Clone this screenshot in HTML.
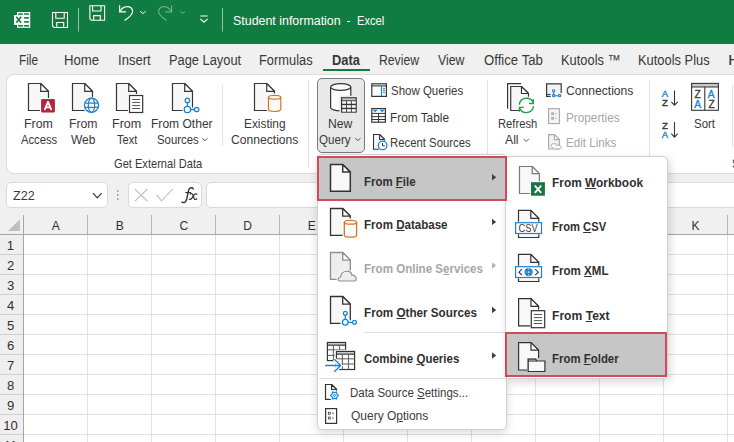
<!DOCTYPE html>
<html><head><meta charset="utf-8">
<style>
*{margin:0;padding:0;box-sizing:border-box}
html,body{width:734px;height:442px;overflow:hidden;background:#fff;font-family:"Liberation Sans",sans-serif;color:#262626}
.a{position:absolute}
.t{position:absolute;white-space:nowrap;transform-origin:0 0}
svg{position:absolute;overflow:visible}
</style></head><body>
<div class="a" style="left:0;top:0;width:734px;height:44px;background:#107c41"></div>
<div class="a" style="left:0;top:44px;width:734px;height:190px;background:#f0f0f0"></div>
<div class="a" style="left:323px;top:69px;width:47px;height:2px;background:#107c41"></div>
<div class="a" style="left:6px;top:74px;width:741px;height:100px;background:#fff;border:1px solid #dcdcdc;border-radius:8px"></div>
<!-- ribbon separators -->
<div class="a" style="left:222px;top:85px;width:1px;height:61px;background:#e1e1e1"></div>
<div class="a" style="left:308px;top:80px;width:1px;height:88px;background:#e1e1e1"></div>
<div class="a" style="left:487px;top:80px;width:1px;height:88px;background:#e1e1e1"></div>
<div class="a" style="left:649px;top:80px;width:1px;height:88px;background:#e1e1e1"></div>
<div class="a" style="left:732px;top:85px;width:1px;height:62px;background:#e1e1e1"></div>
<!-- new query button -->
<div class="a" style="left:317px;top:78px;width:48px;height:75px;background:#e8e8e8;border:1px solid #7a7a7a;border-radius:5px"></div>
<!-- formula bar -->
<div class="a" style="left:6px;top:182px;width:102px;height:26px;background:#fff;border:1px solid #dadada;border-radius:5px"></div>
<div class="a" style="left:128px;top:182px;width:74px;height:26px;background:#fff;border:1px solid #dadada;border-radius:5px"></div>
<div class="a" style="left:206px;top:182px;width:560px;height:26px;background:#fff;border:1px solid #dadada;border-radius:5px"></div>
<div class="a" style="left:87px;top:234px;width:1px;height:208px;background:#e1e1e1"></div>
<div class="a" style="left:151px;top:234px;width:1px;height:208px;background:#e1e1e1"></div>
<div class="a" style="left:215px;top:234px;width:1px;height:208px;background:#e1e1e1"></div>
<div class="a" style="left:279px;top:234px;width:1px;height:208px;background:#e1e1e1"></div>
<div class="a" style="left:343px;top:234px;width:1px;height:208px;background:#e1e1e1"></div>
<div class="a" style="left:407px;top:234px;width:1px;height:208px;background:#e1e1e1"></div>
<div class="a" style="left:471px;top:234px;width:1px;height:208px;background:#e1e1e1"></div>
<div class="a" style="left:535px;top:234px;width:1px;height:208px;background:#e1e1e1"></div>
<div class="a" style="left:599px;top:234px;width:1px;height:208px;background:#e1e1e1"></div>
<div class="a" style="left:663px;top:234px;width:1px;height:208px;background:#e1e1e1"></div>
<div class="a" style="left:727px;top:234px;width:1px;height:208px;background:#e1e1e1"></div>
<div class="a" style="left:24px;top:254px;width:710px;height:1px;background:#e1e1e1"></div>
<div class="a" style="left:24px;top:274px;width:710px;height:1px;background:#e1e1e1"></div>
<div class="a" style="left:24px;top:294px;width:710px;height:1px;background:#e1e1e1"></div>
<div class="a" style="left:24px;top:314px;width:710px;height:1px;background:#e1e1e1"></div>
<div class="a" style="left:24px;top:334px;width:710px;height:1px;background:#e1e1e1"></div>
<div class="a" style="left:24px;top:354px;width:710px;height:1px;background:#e1e1e1"></div>
<div class="a" style="left:24px;top:374px;width:710px;height:1px;background:#e1e1e1"></div>
<div class="a" style="left:24px;top:394px;width:710px;height:1px;background:#e1e1e1"></div>
<div class="a" style="left:24px;top:414px;width:710px;height:1px;background:#e1e1e1"></div>
<div class="a" style="left:24px;top:434px;width:710px;height:1px;background:#e1e1e1"></div>
<div class="a" style="left:0;top:234px;width:23px;height:208px;background:#efefef"></div>
<div class="a" style="left:0;top:254px;width:23px;height:1px;background:#cfcfcf"></div>
<div class="a" style="left:0;top:274px;width:23px;height:1px;background:#cfcfcf"></div>
<div class="a" style="left:0;top:294px;width:23px;height:1px;background:#cfcfcf"></div>
<div class="a" style="left:0;top:314px;width:23px;height:1px;background:#cfcfcf"></div>
<div class="a" style="left:0;top:334px;width:23px;height:1px;background:#cfcfcf"></div>
<div class="a" style="left:0;top:354px;width:23px;height:1px;background:#cfcfcf"></div>
<div class="a" style="left:0;top:374px;width:23px;height:1px;background:#cfcfcf"></div>
<div class="a" style="left:0;top:394px;width:23px;height:1px;background:#cfcfcf"></div>
<div class="a" style="left:0;top:414px;width:23px;height:1px;background:#cfcfcf"></div>
<div class="a" style="left:0;top:434px;width:23px;height:1px;background:#cfcfcf"></div>
<div class="a" style="left:23px;top:215px;width:1px;height:227px;background:#a6a6a6"></div>
<div class="a" style="left:87px;top:215px;width:1px;height:19px;background:#b4b4b4"></div>
<div class="a" style="left:151px;top:215px;width:1px;height:19px;background:#b4b4b4"></div>
<div class="a" style="left:215px;top:215px;width:1px;height:19px;background:#b4b4b4"></div>
<div class="a" style="left:279px;top:215px;width:1px;height:19px;background:#b4b4b4"></div>
<div class="a" style="left:343px;top:215px;width:1px;height:19px;background:#b4b4b4"></div>
<div class="a" style="left:407px;top:215px;width:1px;height:19px;background:#b4b4b4"></div>
<div class="a" style="left:471px;top:215px;width:1px;height:19px;background:#b4b4b4"></div>
<div class="a" style="left:535px;top:215px;width:1px;height:19px;background:#b4b4b4"></div>
<div class="a" style="left:599px;top:215px;width:1px;height:19px;background:#b4b4b4"></div>
<div class="a" style="left:663px;top:215px;width:1px;height:19px;background:#b4b4b4"></div>
<div class="a" style="left:727px;top:215px;width:1px;height:19px;background:#b4b4b4"></div>
<div class="a" style="left:0;top:234px;width:734px;height:1px;background:#a6a6a6"></div>
<svg style="left:0;top:0" width="734" height="442"><polygon points="20,219 20,231 8,231" fill="#bfbfbf"/></svg>
<div class="t" style="left:232.64px;top:14.26px;font-size:13.08px;line-height:14.61px;font-weight:normal;color:#ffffff;transform:scaleX(0.9493);">Student information</div>
<div class="t" style="left:356.81px;top:14.26px;font-size:13.08px;line-height:14.61px;font-weight:normal;color:#ffffff;transform:scaleX(0.8542);">Excel</div>
<div class="a" style="left:346.7px;top:21.3px;width:3.8px;height:1.1px;background:#fff"></div>
<div class="t" style="left:18.75px;top:52.51px;font-size:14.24px;line-height:15.91px;font-weight:normal;color:#383838;transform:scaleX(0.8320);">File</div>
<div class="t" style="left:64.44px;top:52.51px;font-size:14.24px;line-height:15.91px;font-weight:normal;color:#383838;transform:scaleX(0.9259);">Home</div>
<div class="t" style="left:118.02px;top:52.51px;font-size:14.24px;line-height:15.91px;font-weight:normal;color:#383838;transform:scaleX(0.9195);">Insert</div>
<div class="t" style="left:168.97px;top:52.51px;font-size:14.24px;line-height:15.91px;font-weight:normal;color:#383838;transform:scaleX(0.9026);">Page Layout</div>
<div class="t" style="left:259.27px;top:52.51px;font-size:14.24px;line-height:15.91px;font-weight:normal;color:#383838;transform:scaleX(0.9037);">Formulas</div>
<div class="t" style="left:378.72px;top:52.51px;font-size:14.24px;line-height:15.91px;font-weight:normal;color:#383838;transform:scaleX(0.8578);">Review</div>
<div class="t" style="left:438.34px;top:52.51px;font-size:14.24px;line-height:15.91px;font-weight:normal;color:#383838;transform:scaleX(0.8673);">View</div>
<div class="t" style="left:483.91px;top:52.51px;font-size:14.24px;line-height:15.91px;font-weight:normal;color:#383838;transform:scaleX(0.9264);">Office Tab</div>
<div class="t" style="left:561.37px;top:52.51px;font-size:14.24px;line-height:15.91px;font-weight:normal;color:#383838;transform:scaleX(0.9043);">Kutools ™</div>
<div class="t" style="left:638.17px;top:52.51px;font-size:14.24px;line-height:15.91px;font-weight:normal;color:#383838;transform:scaleX(0.9051);">Kutools Plus</div>
<div class="t" style="left:331.76px;top:52.51px;font-size:14.24px;line-height:15.91px;font-weight:bold;color:#383838;transform:scaleX(0.9050);">Data</div>
<div class="t" style="left:728.41px;top:52.51px;font-size:14.24px;line-height:15.91px;font-weight:normal;color:#383838;transform:scaleX(1.2160);">H</div>
<div class="t" style="left:24.41px;top:117.95px;font-size:12.21px;line-height:13.64px;font-weight:normal;color:#383838;transform:scaleX(1.0158);">From</div>
<div class="t" style="left:21.24px;top:133.85px;font-size:12.21px;line-height:13.64px;font-weight:normal;color:#383838;transform:scaleX(0.9181);">Access</div>
<div class="t" style="left:68.62px;top:117.95px;font-size:12.21px;line-height:13.64px;font-weight:normal;color:#383838;transform:scaleX(1.0008);">From</div>
<div class="t" style="left:71.14px;top:133.85px;font-size:12.21px;line-height:13.64px;font-weight:normal;color:#383838;transform:scaleX(0.9796);">Web</div>
<div class="t" style="left:112.20px;top:117.95px;font-size:12.21px;line-height:13.64px;font-weight:normal;color:#383838;transform:scaleX(1.0271);">From</div>
<div class="t" style="left:116.78px;top:133.85px;font-size:12.21px;line-height:13.64px;font-weight:normal;color:#383838;transform:scaleX(0.9030);">Text</div>
<div class="t" style="left:151.43px;top:117.95px;font-size:12.21px;line-height:13.64px;font-weight:normal;color:#383838;transform:scaleX(0.9881);">From Other</div>
<div class="t" style="left:156.59px;top:133.85px;font-size:12.21px;line-height:13.64px;font-weight:normal;color:#383838;transform:scaleX(0.9331);">Sources</div>
<div class="t" style="left:243.65px;top:117.95px;font-size:12.21px;line-height:13.64px;font-weight:normal;color:#383838;transform:scaleX(0.9716);">Existing</div>
<div class="t" style="left:230.99px;top:133.85px;font-size:12.21px;line-height:13.64px;font-weight:normal;color:#383838;transform:scaleX(0.9933);">Connections</div>
<div class="t" style="left:328.43px;top:117.95px;font-size:12.21px;line-height:13.64px;font-weight:normal;color:#383838;transform:scaleX(0.9956);">New</div>
<div class="t" style="left:319.18px;top:133.85px;font-size:12.21px;line-height:13.64px;font-weight:normal;color:#383838;transform:scaleX(0.9492);">Query</div>
<div class="t" style="left:497.80px;top:117.95px;font-size:12.21px;line-height:13.64px;font-weight:normal;color:#383838;transform:scaleX(0.9179);">Refresh</div>
<div class="t" style="left:505.44px;top:133.85px;font-size:12.21px;line-height:13.64px;font-weight:normal;color:#383838;transform:scaleX(1.0002);">All</div>
<div class="t" style="left:693.68px;top:117.95px;font-size:12.21px;line-height:13.64px;font-weight:normal;color:#383838;transform:scaleX(0.9387);">Sort</div>
<div class="t" style="left:113.94px;top:158.01px;font-size:11.92px;line-height:13.31px;font-weight:normal;color:#383838;transform:scaleX(0.9320);">Get External Data</div>
<div class="t" style="left:732.03px;top:158.01px;font-size:11.92px;line-height:13.31px;font-weight:normal;color:#383838;transform:scaleX(0.8755);">S</div>
<div class="t" style="left:390.88px;top:84.39px;font-size:12.94px;line-height:14.45px;font-weight:normal;color:#383838;transform:scaleX(0.8877);">Show Queries</div>
<div class="t" style="left:390.45px;top:110.56px;font-size:12.65px;line-height:14.12px;font-weight:normal;color:#383838;transform:scaleX(0.9366);">From Table</div>
<div class="t" style="left:390.49px;top:135.86px;font-size:13.08px;line-height:14.61px;font-weight:normal;color:#383838;transform:scaleX(0.8671);">Recent Sources</div>
<div class="t" style="left:565.99px;top:84.39px;font-size:12.94px;line-height:14.45px;font-weight:normal;color:#383838;transform:scaleX(0.9375);">Connections</div>
<div class="t" style="left:565.66px;top:110.56px;font-size:12.65px;line-height:14.12px;font-weight:normal;color:#a6a6a6;transform:scaleX(0.9305);">Properties</div>
<div class="t" style="left:565.67px;top:135.86px;font-size:13.08px;line-height:14.61px;font-weight:normal;color:#a6a6a6;transform:scaleX(0.8876);">Edit Links</div>
<div class="t" style="left:12.72px;top:188.80px;font-size:13.37px;line-height:14.94px;font-weight:normal;color:#383838;transform:scaleX(0.9439);">Z22</div>
<div class="t" style="left:51.86px;top:220.08px;font-size:12.06px;line-height:13.48px;font-weight:normal;color:#303030;transform:scaleX(1.0000);">A</div>
<div class="t" style="left:115.71px;top:220.08px;font-size:12.06px;line-height:13.48px;font-weight:normal;color:#303030;transform:scaleX(1.0000);">B</div>
<div class="t" style="left:179.50px;top:220.08px;font-size:12.06px;line-height:13.48px;font-weight:normal;color:#303030;transform:scaleX(1.0000);">C</div>
<div class="t" style="left:243.35px;top:220.08px;font-size:12.06px;line-height:13.48px;font-weight:normal;color:#303030;transform:scaleX(1.0000);">D</div>
<div class="t" style="left:307.65px;top:220.08px;font-size:12.06px;line-height:13.48px;font-weight:normal;color:#303030;transform:scaleX(1.0000);">E</div>
<div class="t" style="left:371.98px;top:220.08px;font-size:12.06px;line-height:13.48px;font-weight:normal;color:#303030;transform:scaleX(1.0000);">F</div>
<div class="t" style="left:435.35px;top:220.08px;font-size:12.06px;line-height:13.48px;font-weight:normal;color:#303030;transform:scaleX(1.0000);">G</div>
<div class="t" style="left:499.56px;top:220.08px;font-size:12.06px;line-height:13.48px;font-weight:normal;color:#303030;transform:scaleX(1.0000);">H</div>
<div class="t" style="left:566.24px;top:220.08px;font-size:12.06px;line-height:13.48px;font-weight:normal;color:#303030;transform:scaleX(1.0000);">I</div>
<div class="t" style="left:629.25px;top:220.08px;font-size:12.06px;line-height:13.48px;font-weight:normal;color:#303030;transform:scaleX(1.0000);">J</div>
<div class="t" style="left:691.47px;top:220.08px;font-size:12.06px;line-height:13.48px;font-weight:normal;color:#303030;transform:scaleX(1.0000);">K</div>
<div class="t" style="left:6.87px;top:239.16px;font-size:13.08px;line-height:14.61px;font-weight:normal;color:#303030;transform:scaleX(1.0000);">1</div>
<div class="t" style="left:7.07px;top:259.16px;font-size:13.08px;line-height:14.61px;font-weight:normal;color:#303030;transform:scaleX(1.0000);">2</div>
<div class="t" style="left:7.10px;top:279.16px;font-size:13.08px;line-height:14.61px;font-weight:normal;color:#303030;transform:scaleX(1.0000);">3</div>
<div class="t" style="left:7.10px;top:299.16px;font-size:13.08px;line-height:14.61px;font-weight:normal;color:#303030;transform:scaleX(1.0000);">4</div>
<div class="t" style="left:7.07px;top:319.16px;font-size:13.08px;line-height:14.61px;font-weight:normal;color:#303030;transform:scaleX(1.0000);">5</div>
<div class="t" style="left:7.04px;top:339.16px;font-size:13.08px;line-height:14.61px;font-weight:normal;color:#303030;transform:scaleX(1.0000);">6</div>
<div class="t" style="left:7.07px;top:359.16px;font-size:13.08px;line-height:14.61px;font-weight:normal;color:#303030;transform:scaleX(1.0000);">7</div>
<div class="t" style="left:7.04px;top:379.16px;font-size:13.08px;line-height:14.61px;font-weight:normal;color:#303030;transform:scaleX(1.0000);">8</div>
<div class="t" style="left:7.07px;top:399.16px;font-size:13.08px;line-height:14.61px;font-weight:normal;color:#303030;transform:scaleX(1.0000);">9</div>
<div class="t" style="left:3.21px;top:419.16px;font-size:13.08px;line-height:14.61px;font-weight:normal;color:#303030;transform:scaleX(1.0000);">10</div>
<div class="t" style="left:3.73px;top:439.16px;font-size:13.08px;line-height:14.61px;font-weight:normal;color:#303030;transform:scaleX(1.0000);">11</div>
<svg style="left:0;top:0" width="734" height="442" viewBox="0 0 734 442"><rect x="17" y="12" width="13.2" height="15.8" fill="#ffffff"/><rect x="18.2" y="13.3" width="4.70" height="1.50" fill="#107c41"/><rect x="18.2" y="17.1" width="4.70" height="1.60" fill="#107c41"/><rect x="18.2" y="21.1" width="4.70" height="1.60" fill="#107c41"/><rect x="18.2" y="25" width="4.70" height="1.60" fill="#107c41"/><rect x="24.1" y="13.3" width="4.80" height="1.50" fill="#107c41"/><rect x="24.1" y="17.1" width="4.80" height="1.60" fill="#107c41"/><rect x="24.1" y="21.1" width="4.80" height="1.60" fill="#107c41"/><rect x="24.1" y="25" width="4.80" height="1.60" fill="#107c41"/><rect x="14" y="15" width="9.5" height="10" fill="#ffffff"/><path d="M16.3 16.8 L21.2 22.8 M21.2 16.8 L16.3 22.8" stroke="#107c41" stroke-width="1.6"/><path d="M52.5 12.5 H67.5 V27.5 H54 L52.5 26 Z" fill="none" stroke="#ffffff" stroke-width="1.1"/><path d="M55.8 12.5 V18.2 H64.2 V12.5" fill="none" stroke="#ffffff" stroke-width="1.1"/><path d="M56.8 27.5 V22.5 H63.7 V27.5" fill="none" stroke="#ffffff" stroke-width="1.1"/><path d="M89.9 5.8 H104.6 V20.2 H91.4 L89.9 18.7 Z" fill="none" stroke="#ffffff" stroke-width="1.1"/><path d="M92.6 5.8 V11 H101 V5.8" fill="none" stroke="#ffffff" stroke-width="1.1"/><path d="M93.7 20.2 V15.6 H100.3 V20.2" fill="none" stroke="#ffffff" stroke-width="1.1"/><rect x="78" y="8" width="1" height="23.6" fill="rgba(255,255,255,0.55)"/><rect x="222" y="8" width="1" height="23.6" fill="rgba(255,255,255,0.55)"/><path d="M119.6 5.3 V11.8 H126" fill="none" stroke="#ffffff" stroke-width="1.2"/><path d="M120.3 11.2 C123 5.5 131.5 5 132.6 10.8 C133.3 14 130 16.8 124.5 20.6" fill="none" stroke="#ffffff" stroke-width="1.2"/><path d="M140.2 11.2 L142.9 13.6 L145.6 11.2" fill="none" stroke="#ffffff" stroke-width="1"/><path d="M171.6 5.3 V11.8 H165.2" fill="none" stroke="rgba(255,255,255,0.38)" stroke-width="1.2"/><path d="M170.9 11.2 C168.2 5.5 159.7 5 158.6 10.8 C157.9 14 161.2 16.8 166.7 20.6" fill="none" stroke="rgba(255,255,255,0.38)" stroke-width="1.2"/><path d="M179.8 11.2 L182.4 13.4 L185 11.2" fill="none" stroke="rgba(255,255,255,0.38)" stroke-width="1"/><path d="M200.3 16 H207.6 M200.3 18.8 L203.95 22.2 L207.6 18.8" fill="none" stroke="#ffffff" stroke-width="1.1"/><path d="M28.5 83.5 H40.7 L48.5 91.3 V110.5 H28.5 Z" fill="#f7f7f7" stroke="#363636" stroke-width="1.2" stroke-miterlimit="2"/><path d="M40.7 83.5 V91.3 H48.5 Z" fill="#ffffff" stroke="#363636" stroke-width="1.2" stroke-miterlimit="2"/><rect x="40" y="98" width="16" height="15.6" fill="#fff"/><rect x="41.1" y="99.1" width="13.8" height="13.5" rx="1" fill="#b5243a"/><path d="M44.6 110 L48 101.8 L51.4 110 M45.9 107.4 H50.1" fill="none" stroke="#fff" stroke-width="1.9" stroke-linejoin="round"/><path d="M72.5 83.5 H84.7 L92.5 91.3 V110.5 H72.5 Z" fill="#f7f7f7" stroke="#363636" stroke-width="1.2" stroke-miterlimit="2"/><path d="M84.7 83.5 V91.3 H92.5 Z" fill="#ffffff" stroke="#363636" stroke-width="1.2" stroke-miterlimit="2"/><circle cx="91.5" cy="105.3" r="8.6" fill="#fff"/><circle cx="91.5" cy="105.3" r="7.1" fill="#fff" stroke="#1b82d1" stroke-width="1.3"/><ellipse cx="91.5" cy="105.3" rx="3.2" ry="7.1" fill="none" stroke="#1b82d1" stroke-width="1.2"/><path d="M84.6 103.2 H98.4 M84.6 107.4 H98.4" stroke="#1b82d1" stroke-width="1.2"/><path d="M116.5 83.5 H128.7 L136.5 91.3 V110.5 H116.5 Z" fill="#f7f7f7" stroke="#363636" stroke-width="1.2" stroke-miterlimit="2"/><path d="M128.7 83.5 V91.3 H136.5 Z" fill="#ffffff" stroke="#363636" stroke-width="1.2" stroke-miterlimit="2"/><rect x="128" y="94" width="16" height="20" fill="#fff"/><rect x="129.5" y="95.5" width="13.2" height="17" fill="#fff" stroke="#363636" stroke-width="1.2"/><path d="M132.2 99.5 H140" stroke="#555" stroke-width="1"/><path d="M132.2 102.5 H140" stroke="#555" stroke-width="1"/><path d="M132.2 105.5 H140" stroke="#555" stroke-width="1"/><path d="M132.2 108.5 H140" stroke="#555" stroke-width="1"/><path d="M172.5 83.5 H184.7 L192.5 91.3 V110.5 H172.5 Z" fill="#f7f7f7" stroke="#363636" stroke-width="1.2" stroke-miterlimit="2"/><path d="M184.7 83.5 V91.3 H192.5 Z" fill="#ffffff" stroke="#363636" stroke-width="1.2" stroke-miterlimit="2"/><circle cx="187.4" cy="109.5" r="5.2" fill="#fff"/><circle cx="196.6" cy="109.5" r="3.7" fill="#fff"/><circle cx="187.4" cy="100.4" r="3.7" fill="#fff"/><path d="M187.4 100.4 V109.5 H196.6" stroke="#fff" stroke-width="4" fill="none"/><path d="M187.4 102.60000000000001 V106.3 M190.6 109.5 H194.4" stroke="#1b82d1" stroke-width="1.3"/><circle cx="187.4" cy="100.4" r="2.2" fill="#fff" stroke="#1b82d1" stroke-width="1.3"/><circle cx="187.4" cy="109.5" r="3.2" fill="#fff" stroke="#1b82d1" stroke-width="1.3"/><circle cx="196.6" cy="109.5" r="2.2" fill="#fff" stroke="#1b82d1" stroke-width="1.3"/><path d="M254.5 83.5 H266.7 L274.5 91.3 V110.5 H254.5 Z" fill="#f7f7f7" stroke="#363636" stroke-width="1.2" stroke-miterlimit="2"/><path d="M266.7 83.5 V91.3 H274.5 Z" fill="#ffffff" stroke="#363636" stroke-width="1.2" stroke-miterlimit="2"/><path d="M268.4 97.2 V109.6 A6.200000000000017 1.9 0 0 0 280.8 109.6 V97.2 A6.200000000000017 1.9 0 0 0 268.4 97.2 Z" fill="#fff" stroke="#fff" stroke-width="3.5999999999999996"/><path d="M268.4 97.2 V109.6 A6.200000000000017 1.9 0 0 0 280.8 109.6 V97.2" fill="#fbfbfb" stroke="#d9731d" stroke-width="1.2"/><ellipse cx="274.6" cy="97.2" rx="6.200000000000017" ry="1.9" fill="#fbfbfb" stroke="#d9731d" stroke-width="1.2"/><path d="M330.6 87 V107.8 A10.1 3 0 0 0 350.8 107.8 V87" fill="#fbfbfb" stroke="#363636" stroke-width="1.2"/><ellipse cx="340.7" cy="87" rx="10.1" ry="3.4" fill="#fbfbfb" stroke="#363636" stroke-width="1.2"/><rect x="339.5" y="95.8" width="18.6" height="18.2" fill="#e8e8e8"/><rect x="341" y="97.2" width="15.8" height="15.5" fill="#363636"/><rect x="342.2" y="98.3" width="13.4" height="2" fill="#c8c8c8"/><rect x="342.2" y="101.2" width="3.9" height="2.5" fill="#fff"/><rect x="342.2" y="105.2" width="3.9" height="2.5" fill="#fff"/><rect x="342.2" y="109.2" width="3.9" height="2.5" fill="#fff"/><rect x="347.0" y="101.2" width="3.9" height="2.5" fill="#fff"/><rect x="347.0" y="105.2" width="3.9" height="2.5" fill="#fff"/><rect x="347.0" y="109.2" width="3.9" height="2.5" fill="#fff"/><rect x="351.8" y="101.2" width="3.9" height="2.5" fill="#fff"/><rect x="351.8" y="105.2" width="3.9" height="2.5" fill="#fff"/><rect x="351.8" y="109.2" width="3.9" height="2.5" fill="#fff"/><rect x="371.8" y="83.8" width="14.6" height="12.6" fill="#fff" stroke="#363636" stroke-width="1.2"/><path d="M371.8 85.9 H386.4" stroke="#363636" stroke-width="1.1"/><path d="M381.5 86.3 V96" stroke="#1b82d1" stroke-width="1.2"/><rect x="383.2" y="87.80000000000001" width="1.6" height="1.3" fill="#1b82d1"/><rect x="383.2" y="89.80000000000001" width="1.6" height="1.3" fill="#1b82d1"/><rect x="383.2" y="91.9" width="1.6" height="1.3" fill="#1b82d1"/><rect x="371.8" y="108.6" width="13.6" height="13.6" fill="#fff" stroke="#363636" stroke-width="1.2"/><path d="M371.8 113.4 H385.4 M371.8 116.6 H385.4 M371.8 119.5 H385.4 M378.6 113.4 V122" stroke="#363636" stroke-width="1"/><path d="M373.2 110.1 H377.2 L375.2 111.9 Z M380.2 110.1 H384.2 L382.2 111.9 Z" fill="#1b82d1" stroke="#1b82d1" stroke-width="0.6"/><path d="M373.5 134.5 H379.6 L384.6 139.5 V149.3 H373.5 Z" fill="#f7f7f7" stroke="#363636" stroke-width="1.1" stroke-miterlimit="2"/><path d="M379.6 134.5 V139.5 H384.6 Z" fill="#ffffff" stroke="#363636" stroke-width="1.1" stroke-miterlimit="2"/><circle cx="382.6" cy="145.4" r="5.4" fill="#fff"/><circle cx="382.6" cy="145.4" r="4.3" fill="#fff" stroke="#1b82d1" stroke-width="1.3"/><path d="M382.5 143 V145.8 H384.8" fill="none" stroke="#363636" stroke-width="1"/><path d="M507.6 108.7 V83.6 H521" fill="none" stroke="#363636" stroke-width="1.2"/><path d="M510.7 86.5 H521.5 L528.5 93.5 V110.5 H510.7 Z" fill="#f7f7f7" stroke="#363636" stroke-width="1.2" stroke-miterlimit="2"/><path d="M521.5 86.5 V93.5 H528.5 Z" fill="#ffffff" stroke="#363636" stroke-width="1.2" stroke-miterlimit="2"/><circle cx="526.4" cy="105.2" r="9" fill="#fff"/><path d="M519.3 104.6 A7.25 7.25 0 0 1 533.4 103.3" fill="none" stroke="#22a049" stroke-width="1.35"/><path d="M533.4 98.9 V103.5 H529" fill="none" stroke="#22a049" stroke-width="1.35"/><path d="M533.5 106.2 A7.25 7.25 0 0 1 519.4 107.5" fill="none" stroke="#22a049" stroke-width="1.35"/><path d="M519.4 111.8 V107.3 H523.8" fill="none" stroke="#22a049" stroke-width="1.35"/><rect x="545.5" y="83" width="16.6" height="14" fill="#fff"/><rect x="547.2" y="84.6" width="13.2" height="9.2" fill="#f3f3f3"/><path d="M550.7 96.4 H546.6 V83.8 H561.2 V93" fill="none" stroke="#363636" stroke-width="1.2"/><path d="M546.6 94.4 H550.7" stroke="#363636" stroke-width="1"/><path d="M553.7 90.9 V95.7 H559.6" fill="none" stroke="#fff" stroke-width="3.6"/><rect x="551.6" y="88.8" width="4.2" height="4.2" rx="1" fill="#fff"/><rect x="551.6" y="93.6" width="4.2" height="4.2" rx="1" fill="#fff"/><rect x="557.5" y="93.6" width="4.2" height="4.2" rx="1" fill="#fff"/><path d="M553.7 90.9 V95.7 H559.6" fill="none" stroke="#1b82d1" stroke-width="1.1"/><rect x="552.6" y="89.8" width="2.2" height="2.2" rx="0.6" fill="#fff" stroke="#1b82d1" stroke-width="1.1"/><rect x="552.6" y="94.6" width="2.2" height="2.2" rx="0.6" fill="#fff" stroke="#1b82d1" stroke-width="1.1"/><rect x="558.5" y="94.6" width="2.2" height="2.2" rx="0.6" fill="#fff" stroke="#1b82d1" stroke-width="1.1"/><rect x="548.6" y="108.6" width="10.8" height="15" fill="#f4f4f4" stroke="#a8a8a8" stroke-width="1.1"/><rect x="551.7" y="112.8" width="1.8" height="1.8" fill="none" stroke="#a8a8a8" stroke-width="0.9"/><rect x="551.7" y="117.4" width="1.8" height="1.8" fill="none" stroke="#a8a8a8" stroke-width="0.9"/><path d="M555.2 113.7 H556.8 M555.2 118.3 H556.8" stroke="#a8a8a8" stroke-width="0.9"/><path d="M548.6 134.6 H554.4 L559.4 139.6 V149 H548.6 Z" fill="#f4f4f4" stroke="#a8a8a8" stroke-width="1.1" stroke-miterlimit="2"/><path d="M554.4 134.6 V139.6 H559.4 Z" fill="#ffffff" stroke="#a8a8a8" stroke-width="1.1" stroke-miterlimit="2"/><path d="M553 147.5 C550 147.5 550.5 143.6 553.5 143.8 L556.5 143.8 M556 145.2 L559 145.2 C562 145.2 562 149 559 149 L556 149" fill="#fff" stroke="#a8a8a8" stroke-width="1"/><text x="661.8" y="97" font-family="Liberation Sans" font-size="9.6" fill="#1b82d1" stroke="#1b82d1" stroke-width="0.35">A</text><text x="661.9" y="105.7" font-family="Liberation Sans" font-size="9.6" fill="#363636" stroke="#363636" stroke-width="0.35">Z</text><path d="M674.5 90.6 V105 M671.3 101.8 L674.5 105.2 L677.7 101.8" fill="none" stroke="#363636" stroke-width="1.1"/><text x="661.9" y="128.7" font-family="Liberation Sans" font-size="9.6" fill="#363636" stroke="#363636" stroke-width="0.35">Z</text><text x="661.8" y="138" font-family="Liberation Sans" font-size="9.6" fill="#1b82d1" stroke="#1b82d1" stroke-width="0.35">A</text><path d="M674.5 122 V137 M671.3 133.6 L674.5 137.2 L677.7 133.6" fill="none" stroke="#363636" stroke-width="1.1"/><rect x="691.6" y="83.4" width="26.8" height="3.6" fill="#c8c8c8"/><rect x="691.6" y="83.4" width="26.8" height="26.9" fill="none" stroke="#363636" stroke-width="1.1"/><path d="M691.6 87 H718.4 M704.8 87 V110.3" stroke="#363636" stroke-width="1.1"/><text x="694.6" y="97.8" font-family="Liberation Sans" font-size="10.2" fill="#363636" stroke="#363636" stroke-width="0.35">Z</text><text x="694.2" y="108.4" font-family="Liberation Sans" font-size="10.2" fill="#1b82d1" stroke="#1b82d1" stroke-width="0.35">A</text><text x="707.8" y="97.8" font-family="Liberation Sans" font-size="10.2" fill="#1b82d1" stroke="#1b82d1" stroke-width="0.35">A</text><text x="708.4" y="108.4" font-family="Liberation Sans" font-size="10.2" fill="#363636" stroke="#363636" stroke-width="0.35">Z</text><path d="M202.3 138.4 L204.9 140.6 L207.5 138.4" fill="none" stroke="#444" stroke-width="0.9"/><path d="M355.3 138.3 L357.90000000000003 140.5 L360.5 138.3" fill="none" stroke="#444" stroke-width="0.9"/><path d="M523.6 139.1 L526.2 141.29999999999998 L528.8000000000001 139.1" fill="none" stroke="#444" stroke-width="0.9"/><path d="M93 193.2 L97.3 197.8 L101.6 193.2" fill="none" stroke="#363636" stroke-width="1.2"/><rect x="117" y="190.3" width="1.5" height="1.5" fill="#8a8a8a"/><rect x="117" y="194.3" width="1.5" height="1.5" fill="#8a8a8a"/><rect x="117" y="198.3" width="1.5" height="1.5" fill="#8a8a8a"/><path d="M134.8 189 L147.4 201.2 M147.4 189 L134.8 201.2" stroke="#c4c4c4" stroke-width="1.2"/><path d="M156.6 195 L161.6 200.8 L172.6 189.2" fill="none" stroke="#c4c4c4" stroke-width="1.2"/><path d="M193.3 188.9 C192.2 187.2 189.6 187.4 188.8 189.6 C188.2 191.5 187.2 197.5 186.4 200 C185.7 202.5 183.8 203.2 182 202.1" fill="none" stroke="#363636" stroke-width="1.45" stroke-linecap="round"/><path d="M185.3 192.6 H191.2" stroke="#363636" stroke-width="1.2"/><path d="M190.3 194 C191.5 193.2 192.5 193.6 193.1 195.5 L194.1 198.4 C194.6 199.6 195.6 199.7 196.7 198.9 M196.9 194.2 C195.9 193.4 194.9 193.8 193.6 195.6 L191.7 198.3 C191.0 199.4 190.2 199.6 189.3 199.2" fill="none" stroke="#363636" stroke-width="1.25" stroke-linecap="round"/></svg>
<!-- main menu -->
<div class="a" style="left:317px;top:154px;width:190px;height:276px;background:#fff;border:1px solid #d2d2d2;border-radius:5px;box-shadow:0 3px 10px rgba(0,0,0,0.15)"></div>
<div class="a" style="left:363px;top:332px;width:142px;height:1px;background:#dedede"></div>
<div class="a" style="left:319px;top:378px;width:186px;height:1px;background:#dedede"></div>
<!-- submenu -->
<div class="a" style="left:505px;top:156px;width:163px;height:223px;background:#fff;border:1px solid #d2d2d2;border-radius:5px;box-shadow:2px 3px 10px rgba(0,0,0,0.16)"></div>
<div class="a" style="left:317px;top:156px;width:190px;height:45px;background:#c6c6c6;border:2px solid #d4485c"></div>
<div class="a" style="left:505px;top:332px;width:162px;height:45px;background:#c6c6c6;border:2px solid #d4485c"></div>

<div class="t" style="left:363.76px;top:173.97px;font-size:13.52px;line-height:15.10px;font-weight:bold;color:#303030;transform:scaleX(0.8474);">From <u>F</u>ile</div>
<div class="t" style="left:363.65px;top:218.26px;font-size:13.08px;line-height:14.61px;font-weight:bold;color:#303030;transform:scaleX(0.8841);">From <u>D</u>atabase</div>
<div class="t" style="left:363.65px;top:262.10px;font-size:13.37px;line-height:14.94px;font-weight:bold;color:#a6a6a6;transform:scaleX(0.8658);">From Online S<u>e</u>rvices</div>
<div class="t" style="left:363.74px;top:306.26px;font-size:13.08px;line-height:14.61px;font-weight:bold;color:#303030;transform:scaleX(0.8927);">From <u>O</u>ther Sources</div>
<div class="t" style="left:364.04px;top:352.10px;font-size:13.37px;line-height:14.94px;font-weight:bold;color:#303030;transform:scaleX(0.8618);">Combine <u>Q</u>ueries</div>
<div class="t" style="left:350.48px;top:385.96px;font-size:13.08px;line-height:14.61px;font-weight:normal;color:#3a3a3a;transform:scaleX(0.8779);">Data Source <u>S</u>ettings...</div>
<div class="t" style="left:350.86px;top:409.42px;font-size:12.79px;line-height:14.29px;font-weight:normal;color:#3a3a3a;transform:scaleX(0.9372);">Query O<u>p</u>tions</div>
<div class="t" style="left:551.83px;top:176.06px;font-size:13.08px;line-height:14.61px;font-weight:bold;color:#303030;transform:scaleX(0.9097);">From <u>W</u>orkbook</div>
<div class="t" style="left:551.87px;top:220.06px;font-size:13.08px;line-height:14.61px;font-weight:bold;color:#303030;transform:scaleX(0.8560);">From <u>C</u>SV</div>
<div class="t" style="left:552.05px;top:264.33px;font-size:13.23px;line-height:14.77px;font-weight:bold;color:#303030;transform:scaleX(0.8735);">From <u>X</u>ML</div>
<div class="t" style="left:552.01px;top:308.62px;font-size:12.79px;line-height:14.29px;font-weight:bold;color:#303030;transform:scaleX(0.9472);">From <u>T</u>ext</div>
<div class="t" style="left:552.06px;top:351.90px;font-size:13.37px;line-height:14.94px;font-weight:bold;color:#303030;transform:scaleX(0.8550);">From <u>F</u>older</div>
<svg style="left:0;top:0" width="734" height="442" viewBox="0 0 734 442"><path d="M330.5 164.5 H342.7 L350.3 172.1 V191.2 H330.5 Z" fill="#f8f8f8" stroke="#333333" stroke-width="1.5" stroke-miterlimit="2"/><path d="M342.7 164.5 V172.1 H350.3 Z" fill="#ffffff" stroke="#333333" stroke-width="1.5" stroke-miterlimit="2"/><path d="M330.5 208.5 H342.7 L350.3 216.1 V235.4 H330.5 Z" fill="#f8f8f8" stroke="#333333" stroke-width="1.3" stroke-miterlimit="2"/><path d="M342.7 208.5 V216.1 H350.3 Z" fill="#ffffff" stroke="#333333" stroke-width="1.3" stroke-miterlimit="2"/><path d="M344.3 222.3 V235.2 A6.150000000000006 1.9 0 0 0 356.6 235.2 V222.3 A6.150000000000006 1.9 0 0 0 344.3 222.3 Z" fill="#fff" stroke="#fff" stroke-width="3.7"/><path d="M344.3 222.3 V235.2 A6.150000000000006 1.9 0 0 0 356.6 235.2 V222.3" fill="#fbfbfb" stroke="#d9731d" stroke-width="1.3"/><ellipse cx="350.45000000000005" cy="222.3" rx="6.150000000000006" ry="1.9" fill="#fbfbfb" stroke="#d9731d" stroke-width="1.3"/><path d="M330.5 252.5 H342.7 L350.3 260.1 V279.4 H330.5 Z" fill="#eeeeee" stroke="#8f8f8f" stroke-width="1.3" stroke-miterlimit="2"/><path d="M342.7 252.5 V260.1 H350.3 Z" fill="#ffffff" stroke="#8f8f8f" stroke-width="1.3" stroke-miterlimit="2"/><path d="M339.8 281.2 C337 281.2 337 276.8 340.4 276.8 C340.6 270 351 268.7 352.2 275 C356.3 274.2 358 281.2 354.8 281.2 Z" fill="#fff" stroke="#fff" stroke-width="2.6"/><path d="M340 281 C337.3 281 337.3 277 340.6 277 C340.8 270.3 350.8 269 352 275.2 C356 274.4 357.6 281 354.6 281 Z" fill="#efefef" stroke="#8f8f8f" stroke-width="1.2"/><path d="M330.5 296.5 H342.7 L350.3 304.1 V323.4 H330.5 Z" fill="#f8f8f8" stroke="#333333" stroke-width="1.3" stroke-miterlimit="2"/><path d="M342.7 296.5 V304.1 H350.3 Z" fill="#ffffff" stroke="#333333" stroke-width="1.3" stroke-miterlimit="2"/><circle cx="345.3" cy="322.3" r="4.9" fill="#fff"/><circle cx="354.5" cy="322.3" r="3.4" fill="#fff"/><circle cx="345.3" cy="313.2" r="3.4" fill="#fff"/><path d="M345.3 313.2 V322.3 H354.5" stroke="#fff" stroke-width="4" fill="none"/><path d="M345.3 315.09999999999997 V319.40000000000003 M348.2 322.3 H352.6" stroke="#1b82d1" stroke-width="1.3"/><circle cx="345.3" cy="313.2" r="1.9" fill="#fff" stroke="#1b82d1" stroke-width="1.3"/><circle cx="345.3" cy="322.3" r="2.9" fill="#fff" stroke="#1b82d1" stroke-width="1.3"/><circle cx="354.5" cy="322.3" r="1.9" fill="#fff" stroke="#1b82d1" stroke-width="1.3"/><rect x="327.4" y="342.5" width="18.200000000000045" height="18.100000000000023" fill="#fff" stroke="#333333" stroke-width="1.2"/><rect x="328.0" y="343.1" width="17.000000000000046" height="2.0999999999999885" fill="#c6c6c6"/><path d="M327.4 345.2 H345.6" stroke="#333333" stroke-width="1.1"/><path d="M333.4 345.2 V360.6" stroke="#666" stroke-width="1.1"/><path d="M339.5 345.2 V360.6" stroke="#666" stroke-width="1.1"/><path d="M327.4 349.8 H345.6" stroke="#666" stroke-width="1.1"/><path d="M327.4 355.4 H345.6" stroke="#666" stroke-width="1.1"/><rect x="334.8" y="349.8" width="21.4" height="21.2" fill="#fff"/><rect x="336.4" y="351.4" width="18.200000000000045" height="18.100000000000023" fill="#fff" stroke="#333333" stroke-width="1.2"/><rect x="337.0" y="352.0" width="17.000000000000046" height="2.2000000000000113" fill="#c6c6c6"/><path d="M336.4 354.2 H354.6" stroke="#333333" stroke-width="1.1"/><path d="M342.4 354.2 V369.5" stroke="#666" stroke-width="1.1"/><path d="M348.5 354.2 V369.5" stroke="#666" stroke-width="1.1"/><path d="M336.4 358.8 H354.6" stroke="#666" stroke-width="1.1"/><path d="M336.4 364 H354.6" stroke="#666" stroke-width="1.1"/><path d="M336 365.5 H340.4 M334.3 359.3 L340.6 365.5 L334.3 371.7" fill="none" stroke="#fff" stroke-width="3.6"/><path d="M325.2 365.5 H340.4 M334.3 359.3 L340.6 365.5 L334.3 371.7" fill="none" stroke="#1b82d1" stroke-width="1.3"/><path d="M325.5 384.5 H331.6 L336.6 389.5 V399.4 H325.5 Z" fill="#fff" stroke="#333333" stroke-width="1.2" stroke-miterlimit="2"/><path d="M331.6 384.5 V389.5 H336.6 Z" fill="#ffffff" stroke="#333333" stroke-width="1.2" stroke-miterlimit="2"/><circle cx="334.5" cy="395.4" r="5.4" fill="#fff"/><polygon points="338.60,395.40 336.84,396.75 336.55,398.95 334.50,398.10 332.45,398.95 332.16,396.75 330.40,395.40 332.16,394.05 332.45,391.85 334.50,392.70 336.55,391.85 336.84,394.05" fill="#fff" stroke="#1b82d1" stroke-width="1.15" stroke-linejoin="round"/><circle cx="334.5" cy="395.4" r="1.1" fill="none" stroke="#1b82d1" stroke-width="1"/><rect x="325.6" y="408.6" width="11" height="14.8" fill="#fff" stroke="#333333" stroke-width="1.2"/><rect x="328.4" y="412.3" width="1.9" height="1.9" fill="none" stroke="#555" stroke-width="0.9"/><rect x="328.4" y="417.1" width="1.9" height="1.9" fill="none" stroke="#555" stroke-width="0.9"/><path d="M332 413.2 H334 M332 418 H334" stroke="#555" stroke-width="0.9"/><path d="M492 174.10000000000002 L496.2 177.3 L492 180.5 Z" fill="#404040"/><path d="M492 218.70000000000002 L496.2 221.9 L492 225.1 Z" fill="#404040"/><path d="M492 262.3 L496.2 265.5 L492 268.7 Z" fill="#b4b4b4"/><path d="M492 306.8 L496.2 310 L492 313.2 Z" fill="#404040"/><path d="M492 352.3 L496.2 355.5 L492 358.7 Z" fill="#404040"/><path d="M519.5 166.5 H532.1999999999999 L539.4 173.7 V193.5 H519.5 Z" fill="#f8f8f8" stroke="#7a7a7a" stroke-width="1.2" stroke-miterlimit="2"/><path d="M532.1999999999999 166.5 V173.7 H539.4 Z" fill="#ffffff" stroke="#7a7a7a" stroke-width="1.2" stroke-miterlimit="2"/><rect x="530" y="181.2" width="16" height="15.5" fill="#fff"/><rect x="531" y="182.2" width="13.9" height="13.5" fill="#1a7343"/><path d="M534.8 185.6 L541.2 192.8 M541.2 185.6 L534.8 192.8" stroke="#fff" stroke-width="1.8"/><path d="M518.5 210.3 H530.8 L538.8 218.3 V237.5 H518.5 Z" fill="#f8f8f8" stroke="#333333" stroke-width="1.2" stroke-miterlimit="2"/><path d="M530.8 210.3 V218.3 H538.8 Z" fill="#ffffff" stroke="#333333" stroke-width="1.2" stroke-miterlimit="2"/><rect x="514.6" y="221.70000000000002" width="27.9" height="12.6" fill="#fff"/><rect x="515.6" y="222.70000000000002" width="25.9" height="10.8" fill="#fff" stroke="#1b82d1" stroke-width="1.2"/><text x="518.6" y="232" font-family="Liberation Sans" font-size="10.2" fill="#3a3a3a" textLength="19" lengthAdjust="spacingAndGlyphs">CSV</text><path d="M518.5 254.3 H530.8 L538.8 262.3 V281.5 H518.5 Z" fill="#f8f8f8" stroke="#333333" stroke-width="1.2" stroke-miterlimit="2"/><path d="M530.8 254.3 V262.3 H538.8 Z" fill="#ffffff" stroke="#333333" stroke-width="1.2" stroke-miterlimit="2"/><rect x="514.6" y="265.7" width="27.9" height="12.6" fill="#fff"/><rect x="515.6" y="266.7" width="25.9" height="10.8" fill="#fff" stroke="#1b82d1" stroke-width="1.2"/><path d="M522 269.2 L518.9 272.2 L522 275.2 M535.2 269.2 L538.3 272.2 L535.2 275.2" fill="none" stroke="#333333" stroke-width="1.1"/><circle cx="528.6" cy="272.1" r="4.2" fill="#1b82d1"/><path d="M524.6 272.1 H532.6" stroke="#6fb3e8" stroke-width="0.8"/><path d="M528.6 268.6 V269.6 M528.6 271.4 V272.8 M528.6 274.6 V275.6" stroke="#fff" stroke-width="1.1"/><path d="M518.6 298.7 H531.0 L538.6 306.3 V325.9 H518.6 Z" fill="#f8f8f8" stroke="#333333" stroke-width="1.2" stroke-miterlimit="2"/><path d="M531.0 298.7 V306.3 H538.6 Z" fill="#ffffff" stroke="#333333" stroke-width="1.2" stroke-miterlimit="2"/><rect x="530.3" y="309.7" width="15.4" height="19" fill="#fff"/><rect x="531.3" y="310.7" width="13.4" height="17" fill="#fff" stroke="#333333" stroke-width="1.2"/><path d="M533.8 314.5 H542" stroke="#555" stroke-width="1"/><path d="M533.8 317.6 H542" stroke="#555" stroke-width="1"/><path d="M533.8 320.6 H542" stroke="#555" stroke-width="1"/><path d="M533.8 323.5 H542" stroke="#555" stroke-width="1"/><path d="M518.6 342.6 H531.0 L538.6 350.20000000000005 V370 H518.6 Z" fill="#f8f8f8" stroke="#333333" stroke-width="1.2" stroke-miterlimit="2"/><path d="M531.0 342.6 V350.20000000000005 H538.6 Z" fill="#ffffff" stroke="#333333" stroke-width="1.2" stroke-miterlimit="2"/><path d="M527 358 H546 V373 H527 Z" fill="#c6c6c6"/><path d="M528.2 359.1 H535.6 L536.6 361 H544.9 V371.5 H528.2 Z" fill="#f8f8f8" stroke="#333333" stroke-width="1.2"/><path d="M528.2 361 H536.6" stroke="#333333" stroke-width="1.1"/></svg>
</body></html>
